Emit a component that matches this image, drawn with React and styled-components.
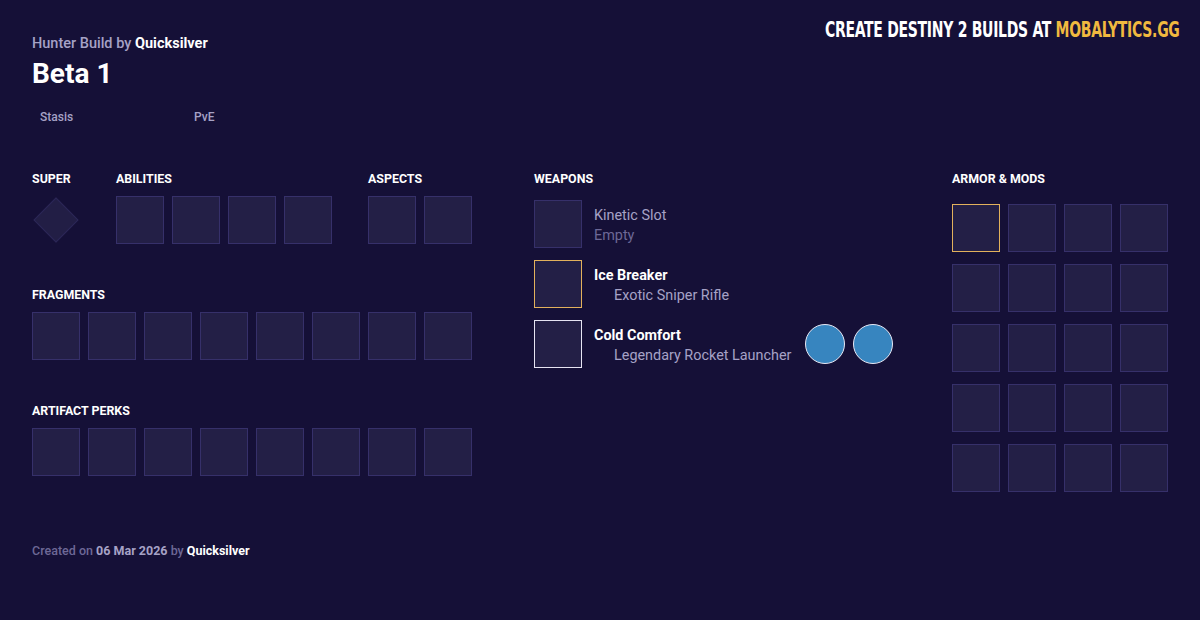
import React from 'react';
import styled, { createGlobalStyle, css } from 'styled-components';

const GlobalStyle = createGlobalStyle`
  html, body {
    margin: 0;
    padding: 0;
    background: #151037;
  }
  body {
    width: 1200px;
    height: 620px;
    overflow: hidden;
    font-family: Roboto, "Noto Sans", sans-serif;
    color: #fff;
  }
`;

const weapons = [
  { name: 'Kinetic Slot', type: 'Empty', empty: true },
  { name: 'Ice Breaker', type: 'Exotic Sniper Rifle', tier: 'exotic' },
  { name: 'Cold Comfort', type: 'Legendary Rocket Launcher', tier: 'legendary', mods: 2 },
];

const App = () => (
  <>
    <GlobalStyle />
    <Page>
      <Promo>
        CREATE DESTINY 2 BUILDS AT <PromoSite>MOBALYTICS.GG</PromoSite>
      </Promo>

      <Head>
        <Byline>
          Hunter Build by <Author>Quicksilver</Author>
        </Byline>
        <Title>Beta 1</Title>
        <Tags>
          <Tag>Stasis</Tag>
          <Tag>PvE</Tag>
        </Tags>
      </Head>

      <Columns>
        <LeftCol>
          <Row>
            <Group>
              <SectionTit>Super</SectionTit>
              <SuperSlot>
                <Diamond />
              </SuperSlot>
            </Group>
            <Group>
              <SectionTit>Abilities</SectionTit>
              <Slots>
                {[0, 1, 2, 3].map((i) => (
                  <Slot key={i} />
                ))}
              </Slots>
            </Group>
            <Group>
              <SectionTit>Aspects</SectionTit>
              <Slots>
                {[0, 1].map((i) => (
                  <Slot key={i} />
                ))}
              </Slots>
            </Group>
          </Row>

          <Group $top="44px">
            <SectionTit>Fragments</SectionTit>
            <Slots>
              {[...Array(8)].map((_, i) => (
                <Slot key={i} />
              ))}
            </Slots>
          </Group>

          <Group $top="44px">
            <SectionTit>Artifact Perks</SectionTit>
            <Slots>
              {[...Array(8)].map((_, i) => (
                <Slot key={i} />
              ))}
            </Slots>
          </Group>
        </LeftCol>

        <WeaponCol>
          <SectionTit>Weapons</SectionTit>
          <WeaponList>
            {weapons.map((w) => (
              <Weapon key={w.name}>
                <Slot $tier={w.tier} />
                <WeaponInfo>
                  <WeaponName $empty={w.empty}>{w.name}</WeaponName>
                  <WeaponType $empty={w.empty}>{w.type}</WeaponType>
                </WeaponInfo>
                {w.mods && (
                  <Mods>
                    {[...Array(w.mods)].map((_, i) => (
                      <ModDot key={i} />
                    ))}
                  </Mods>
                )}
              </Weapon>
            ))}
          </WeaponList>
        </WeaponCol>

        <ArmorCol>
          <SectionTit>Armor &amp; Mods</SectionTit>
          <ArmorGrid>
            {[...Array(20)].map((_, i) => (
              <Slot key={i} $tier={i === 0 ? 'exotic' : undefined} />
            ))}
          </ArmorGrid>
        </ArmorCol>
      </Columns>

      <Footer>
        Created on <FootStrong>06 Mar 2026</FootStrong> by <Author>Quicksilver</Author>
      </Footer>
    </Page>
  </>
);

const Page = styled.div`
  position: relative;
  width: 1200px;
  height: 620px;
  box-sizing: border-box;
  padding: 36px 32px 0;
`;

const Promo = styled.div`
  position: absolute;
  top: 16px;
  right: 20px;
  font-family: "DejaVu Sans Condensed", "DejaVu Sans", sans-serif;
  font-weight: 700;
  font-size: 22px;
  line-height: 28px;
  letter-spacing: -0.4px;
  color: #fff;
  transform: scaleX(0.707);
  transform-origin: right center;
  white-space: nowrap;
`;

const PromoSite = styled.span`
  color: #f0b93f;
`;

const Head = styled.div`
  display: flex;
  flex-direction: column;
`;

const Byline = styled.div`
  font-size: 14.5px;
  line-height: 16px;
  font-weight: 500;
  color: #a6a2c6;
`;

const Author = styled.span`
  font-weight: 700;
  color: #fff;
`;

const Title = styled.h1`
  margin: 6px 0 0;
  font-size: 28px;
  line-height: 32px;
  font-weight: 700;
  color: #fff;
`;

const Tags = styled.div`
  display: flex;
  margin-top: 20px;
  padding-left: 8px;
`;

const Tag = styled.span`
  width: 154px;
  font-size: 12px;
  line-height: 14px;
  font-weight: 500;
  color: #a6a2c6;
`;

const Columns = styled.div`
  display: flex;
  margin-top: 48px;
`;

const LeftCol = styled.div`
  display: flex;
  flex-direction: column;
  width: 502px;
`;

const Row = styled.div`
  display: flex;
  gap: 36px;
`;

const Group = styled.div`
  display: flex;
  flex-direction: column;
  margin-top: ${(p) => p.$top || 0};
`;

const SectionTit = styled.h2`
  margin: 0 0 10px;
  font-size: 12.4px;
  line-height: 14px;
  font-weight: 700;
  text-transform: uppercase;
  color: #fff;
`;

const Slots = styled.div`
  display: flex;
  gap: 8px;
`;

const tierBorder = {
  exotic: '#e2b15c',
  legendary: '#e6e4f2',
};

const Slot = styled.div`
  box-sizing: border-box;
  flex: none;
  width: 48px;
  height: 48px;
  background: #231f46;
  border: 1px solid ${(p) => tierBorder[p.$tier] || '#36306a'};
`;

const SuperSlot = styled.div`
  display: flex;
  align-items: center;
  justify-content: center;
  width: 48px;
  height: 48px;
`;

const Diamond = styled.div`
  box-sizing: border-box;
  width: 32px;
  height: 32px;
  background: #221e45;
  border: 1px solid #2c2758;
  transform: rotate(45deg);
`;

const WeaponCol = styled.div`
  display: flex;
  flex-direction: column;
  width: 418px;
`;

const WeaponList = styled.div`
  display: flex;
  flex-direction: column;
  gap: 12px;
  margin-top: 4px;
`;

const Weapon = styled.div`
  display: flex;
  align-items: flex-start;
`;

const WeaponInfo = styled.div`
  display: flex;
  flex-direction: column;
  gap: 4px;
  margin-left: 12px;
  padding-top: 8px;
`;

const WeaponName = styled.div`
  font-size: 14.4px;
  line-height: 16px;
  font-weight: ${(p) => (p.$empty ? 400 : 700)};
  color: ${(p) => (p.$empty ? '#a6a2c6' : '#fff')};
`;

const WeaponType = styled.div`
  font-size: 14.4px;
  line-height: 16px;
  ${(p) =>
    p.$empty
      ? css`
          color: #6d6896;
        `
      : css`
          padding-left: 20px;
          color: #a6a2c6;
        `}
`;

const Mods = styled.div`
  display: flex;
  align-self: center;
  gap: 8px;
  margin-left: 14px;
`;

const ModDot = styled.span`
  box-sizing: border-box;
  width: 40px;
  height: 40px;
  border-radius: 50%;
  background: #3785bf;
  border: 1px solid #e8e8f4;
`;

const ArmorCol = styled.div`
  display: flex;
  flex-direction: column;
`;

const ArmorGrid = styled.div`
  display: grid;
  grid-template-columns: repeat(4, 48px);
  column-gap: 8px;
  row-gap: 12px;
  margin-top: 8px;
`;

const Footer = styled.div`
  margin-top: 52px;
  font-size: 12.5px;
  line-height: 14px;
  font-weight: 500;
  color: #6d6896;
`;

const FootStrong = styled.span`
  font-weight: 700;
  color: #a6a2c6;
`;

export default App;
